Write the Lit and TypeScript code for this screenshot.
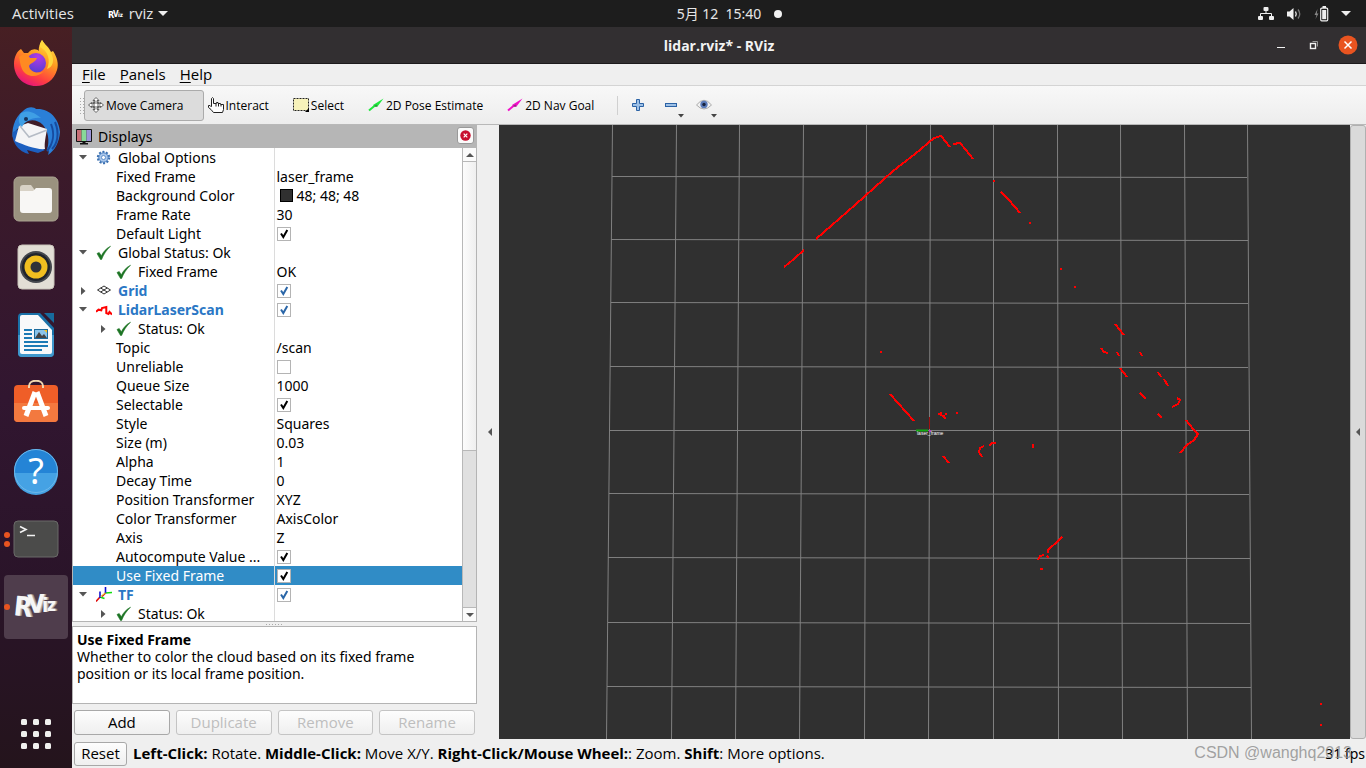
import { LitElement, html, svg, css, nothing } from "lit";
import { customElement, state } from "lit/decorators.js";
import { classMap } from "lit/directives/class-map.js";

type Kind = "gear" | "ok" | "grid" | "scan" | "tf";
interface Row {
  name: string;
  depth: number;
  icon?: Kind;
  arrow?: "open" | "closed";
  display?: boolean;
  value?: string;
  swatch?: boolean;
  check?: boolean;
}

const ROWS: Row[] = [
  { name: "Global Options", depth: 0, icon: "gear", arrow: "open" },
  { name: "Fixed Frame", depth: 1, value: "laser_frame" },
  { name: "Background Color", depth: 1, value: "48; 48; 48", swatch: true },
  { name: "Frame Rate", depth: 1, value: "30" },
  { name: "Default Light", depth: 1, check: true },
  { name: "Global Status: Ok", depth: 0, icon: "ok", arrow: "open" },
  { name: "Fixed Frame", depth: 1, icon: "ok", value: "OK" },
  { name: "Grid", depth: 0, icon: "grid", arrow: "closed", display: true, check: true },
  { name: "LidarLaserScan", depth: 0, icon: "scan", arrow: "open", display: true, check: true },
  { name: "Status: Ok", depth: 1, icon: "ok", arrow: "closed" },
  { name: "Topic", depth: 1, value: "/scan" },
  { name: "Unreliable", depth: 1, check: false },
  { name: "Queue Size", depth: 1, value: "1000" },
  { name: "Selectable", depth: 1, check: true },
  { name: "Style", depth: 1, value: "Squares" },
  { name: "Size (m)", depth: 1, value: "0.03" },
  { name: "Alpha", depth: 1, value: "1" },
  { name: "Decay Time", depth: 1, value: "0" },
  { name: "Position Transformer", depth: 1, value: "XYZ" },
  { name: "Color Transformer", depth: 1, value: "AxisColor" },
  { name: "Axis", depth: 1, value: "Z" },
  { name: "Autocompute Value ...", depth: 1, check: true },
  { name: "Use Fixed Frame", depth: 1, check: true },
  { name: "TF", depth: 0, icon: "tf", arrow: "open", display: true, check: true },
  { name: "Status: Ok", depth: 1, icon: "ok", arrow: "closed" },
];

const rowIcon = (kind: Kind) => {
  switch (kind) {
    case "gear":
      return html`<svg class="ico" viewBox="0 0 16 16" aria-hidden="true">
        <circle cx="7.5" cy="7.500" r="5.600" fill="none" stroke="#3a6fb0" stroke-width="2.200" stroke-dasharray="2 1.520" />
        <circle cx="7.500" cy="7.500" r="4.700" fill="#a9c6ea" stroke="#4a7fc0" />
        <circle cx="7.500" cy="7.500" r="2" fill="#fff" stroke="#4a7fc0" stroke-width=".8" />
      </svg>`;
    case "ok":
      return html`<svg class="ico" viewBox="0 0 16 16" aria-hidden="true">
        <path d="M1 8.500 3.200 7.500 5.300 10.800C7.500 6.500 10.200 3.500 14.500 1.200 10.500 5 7.800 9 5.600 14.500H4.500Z" fill="#1c7424" stroke="#1c7424" stroke-width=".6" />
      </svg>`;
    case "grid":
      return html`<svg class="ico" viewBox="0 0 16 16" aria-hidden="true" fill="none" stroke="#333" stroke-width="1">
        <path d="M8 3 14.500 7 8 11 1.500 7ZM4.700 5 11.200 9M11.200 5 4.700 9" />
      </svg>`;
    case "scan":
      return html`<svg class="ico" viewBox="0 0 16 16" aria-hidden="true" fill="none" stroke="#f00" stroke-width="2">
        <path d="M0 9.700 2.500 7.700 5.300 8.300 6 6 10.300 5V11L12.500 12 13.500 10 16 12.500" />
      </svg>`;
    case "tf":
      return html`<svg class="ico" viewBox="0 0 16 16" aria-hidden="true" fill="none" stroke-width="1.600">
        <path d="M4 10 0 14.500M9.500 6 6 9.500" stroke="#e01010" />
        <path d="M4 10 8.500 11.500M9.500 6 16 5.500" stroke="#10e010" />
        <path d="M4 11V4.500M9.500 6V0" stroke="#1010d0" />
        <path d="M4.500 9.500 9.500 6" stroke="#e0d020" stroke-width="1" />
      </svg>`;
  }
};

/* Runs of laser returns, in viewport pixels. */
const SCAN = [
  "784,267 794,259 804,250",
  "816,239 855,205 893,171 915,154 934,138 941,136 950,147",
  "953,144 960,143 966,150 973,159",
  "993,181 995,181", "1001,192 1009,200 1020,213", "1029,223 1031,223",
  "880,352 882,352", "890,394 914,421",
  "938,414 942,413", "940,415 944,416 945,419", "945,414 947,414", "956,413 958,413",
  "943,456 949,463", "996,443 992,443 989,446", "984,446 980,448 979,452 982,457",
  "1033,444 1033,448", "1060,269 1062,269", "1074,287 1076,287",
  "1115,324 1124,335", "1101,348 1104,352 1108,353", "1117,352 1119,356", "1140,352 1142,356",
  "1120,368 1127,377", "1158,372 1161,377", "1164,379 1168,386", "1140,393 1146,399",
  "1177,398 1180,400 1178,404 1172,407", "1158,414 1162,418",
  "1186,420 1193,429 1198,434 1194,440 1187,445 1180,453",
  "1062,537 1059,540 1048,550 1048,553", "1038,560 1040,556 1044,555", "1047,556 1049,558",
  "1040,569 1043,569", "1320,704 1322,704", "1320,725 1322,725",
];
const TOPS = [612, 676, 739, 803, 866, 930, 993, 1057, 1120, 1184, 1247];
const BOTTOMS = [606, 671, 735, 799, 864, 928, 993, 1058, 1122, 1187, 1251];
const LEVELS = [
  [612, 176, 1247, 177], [611, 239, 1248, 240], [611, 302, 1248, 303], [610, 366, 1248, 367],
  [609, 430, 1249, 430], [609, 493, 1249, 494], [608, 557, 1250, 558], [608, 622, 1250, 623], [607, 686, 1251, 687],
];

@customElement("app-root")
export class AppRoot extends LitElement {
  @state() private selected = 22;

  static styles = css`
    :host {
      display: grid;
      grid-template: 27px minmax(0, 1fr) / 72px minmax(0, 1fr);
      height: 100vh;
      overflow: hidden;
      font: 14px/19px "Noto Sans", "Noto Sans CJK SC", sans-serif;
      color: #000;
      background: #efefef;
    }
    * { box-sizing: border-box; }
    svg { display: block; flex: none; }
    button { font: inherit; color: inherit; border: 0; padding: 0; background: none; }

    .top {
      grid-column: 1 / -1;
      display: grid;
      grid-template-columns: 72px minmax(0, 1fr) auto minmax(0, 1fr);
      align-items: center;
      background: #1d1d1d;
      color: #e6e6e6;
    }
    .top-left { grid-column: 1 / 3; display: flex; align-items: center; padding-left: 12px; gap: 34px; font-family: "Open Sans", sans-serif; font-size: 15px; }
    .app { display: flex; align-items: center; gap: 5px; }
    .clock { display: flex; align-items: center; gap: 13px; }
    .clock::before, .dot { content: ""; width: 8px; height: 8px; border-radius: 50%; }
    .dot { background: #f2f2f2; }
    .clock button { white-space: pre; }
    .tray { display: flex; justify-content: flex-end; align-items: center; gap: 12px; padding-right: 15px; }

    .dock {
      display: flex;
      flex-direction: column;
      align-items: center;
      gap: 4px;
      padding: 4px 0 2px;
      background: linear-gradient(#471f23, #3b1a2a 20%, #311630 50%, #2a1429 75%, #24141c);
    }
    .dock button { position: relative; width: 64px; height: 64px; border-radius: 4px; display: grid; place-items: center; }
    .dock .active { background: #4f3d4c; }
    .dock .apps { margin-top: auto; }
    .pips { position: absolute; left: 0; top: 0; bottom: 0; display: flex; flex-direction: column; justify-content: center; gap: 3px; }
    .pips i { width: 6px; height: 6px; border-radius: 50%; background: #e95420; }

    .win { display: grid; grid-template-rows: 37px 22px 39px minmax(0, 1fr) 29px; min-width: 0; }
    .title { display: grid; grid-template-columns: 1fr auto 1fr; align-items: center; background: #322f31; color: #f2f2f2; border-bottom: 1px solid #1c1a1c; }
    .title h1 { grid-column: 2; margin: 0; font: 700 14px/19px "Open Sans", sans-serif; }
    .controls { display: flex; justify-content: flex-end; align-items: center; gap: 15px; padding-right: 8px; }
    .menu { display: flex; align-items: center; padding-left: 3px; border-bottom: 1px solid #d4d4d4; font-family: "Open Sans", sans-serif; font-size: 15px; }
    .menu button { padding: 0 7px; }
    .menu u { text-underline-offset: 2px; text-decoration-thickness: 1px; }

    .tools {
      display: flex;
      align-items: center;
      padding-left: 7px;
      font-family: "Open Sans", sans-serif;
      font-size: 12px;
      background: linear-gradient(#f8f8f8, #ededed);
      border-bottom: 1px solid #b8b8b8;
    }
    .grip { width: 5px; height: 17px; flex: none; background: radial-gradient(circle, #aaa 40%, transparent 45%) 0 0 / 3px 3px; }
    .tool { display: flex; align-items: center; gap: 2px; height: 31px; padding: 0 19px 0 3px; border: 1px solid transparent; border-radius: 3px; white-space: nowrap; }
    .tool.on { background: #dcdcdc; border-color: #ababab; }
    .small { position: relative; width: 33px; height: 31px; display: grid; place-items: center; }
    .small .more { position: absolute; right: 3px; bottom: 3px; }
    .sep { width: 1px; height: 19px; background: #d0d0d0; margin: 0 3px; }

    .main { display: grid; grid-template-columns: 405px 22px minmax(0, 1fr) 16px; min-height: 0; }
    .panel { display: grid; grid-template-rows: 23px minmax(0, 1fr) 4px 78px 35px; min-height: 0; }
    .head { display: flex; align-items: center; gap: 6px; background: #b6b6b6; padding: 0 3px 0 4px; }
    .head h2 { margin: 0; flex: 1; font: inherit; }
    .close { width: 17px; height: 17px; display: grid; place-items: center; background: #fafafa; border: 1px solid #999; border-radius: 3px; margin-bottom: 2px; }
    .tree { display: flex; overflow: hidden; background: #fff; border: solid #b4b4b4; border-width: 0 1px 1px; }
    .tree table { flex: 1; min-width: 0; border-collapse: collapse; table-layout: fixed; align-self: flex-start; }
    .c-name { width: 201px; }
    td, th { height: 19px; padding: 0; text-align: left; font-weight: 400; white-space: nowrap; overflow: hidden; }
    th { border-right: 1px solid #dcdcdc; }
    .cell { display: flex; align-items: center; height: 19px; }
    .d1 { padding-left: 20px; }
    .leaf { padding-left: 43px; }
    .exp { width: 20px; height: 19px; display: grid; place-items: center; margin-right: 3px; }
    .ico { width: 16px; height: 16px; margin-right: 6px; }
    .display { color: #2a77c5; font-weight: 700; }
    .val { padding-left: 2px; }
    .swatch { width: 13px; height: 13px; margin: 0 4px 0 3px; background: #303030; border: 1px solid #000; }
    .sel { background: #308cc6; }
    .sel th { color: #fff; }
    input {
      appearance: none;
      width: 14px;
      height: 14px;
      margin: 0;
      color: #000;
      background: #fff;
      border: 1px solid #b4b4b4;
      display: grid;
      place-items: center;
    }
    input:checked {
      background: #fff url("data:image/svg+xml,%3Csvg xmlns='http://www.w3.org/2000/svg' viewBox='0 0 12 12'%3E%3Cpath d='M3 5.500 5.300 9 9.300 2' fill='none' stroke='%23000' stroke-width='2'/%3E%3C/svg%3E");
    }
    .blue:checked {
      background-image: url("data:image/svg+xml,%3Csvg xmlns='http://www.w3.org/2000/svg' viewBox='0 0 12 12'%3E%3Cpath d='M3 5.500 5.300 9 9.300 2' fill='none' stroke='%232a66a8' stroke-width='2'/%3E%3C/svg%3E");
    }
    .scroll { width: 14px; display: flex; flex-direction: column; border-left: 1px solid #b8b8b8; background: #e0e0e0; }
    .scroll button { height: 14px; flex: none; display: grid; place-items: center; background: #fbfbfb; }
    .scroll .up { border-bottom: 1px solid #b8b8b8; }
    .scroll .down { border-top: 1px solid #b8b8b8; }
    .track { flex: 1; }
    .thumb { height: 65%; background: linear-gradient(90deg, #fcfcfc, #efefef); border-bottom: 1px solid #b8b8b8; }
    .split { display: grid; place-items: center; }
    .split i { width: 17px; height: 1px; background: repeating-linear-gradient(90deg, #aaa 0 1px, transparent 1px 3px); }
    .help { background: #fff; border: 1px solid #b4b4b4; padding: 4px 12px 4px 4px; }
    .help p, .help h3 { margin: 0; font: inherit; line-height: 17px; }
    .help h3 { font-weight: 700; }
    .actions { display: grid; grid-template-columns: repeat(4, 1fr); gap: 6px; padding: 6px 2px 4px; }
    .push { font-family: "Open Sans", sans-serif; font-size: 15px; border: 1px solid #a8a8a8; border-radius: 3px; background: linear-gradient(#fdfdfd, #efefef); }
    .push:disabled { color: #bebebe; border-color: #c4c4c4; }
    .gutter { display: grid; place-items: center; }
    .left { padding-left: 4px; }
    .right { background: #dadada; border: 1px solid #b0b0b0; border-radius: 3px; }
    .view { width: 100%; height: 100%; background: #303030; min-height: 0; }

    .status { display: flex; align-items: center; gap: 6px; padding-left: 2px; white-space: nowrap; font-family: "Open Sans", sans-serif; font-size: 15px; }
    .status .push { width: 53px; height: 24px; }
    .status p { margin: 0; flex: 1; font-size: 15px; }
    .fps { position: relative; padding-right: 1px; font: 14px/19px "Noto Sans", sans-serif; }
    .mark { position: absolute; right: 14px; top: -1px; font: 16px/19px "Liberation Sans", sans-serif; color: #8c8c8ccc; }
  `;

  private row(r: Row, i: number) {
    const on = i === this.selected;
    const id = "row-" + i;
    const leaf = !r.icon;
    return html`<tr class=${classMap({ sel: on })} @click=${() => (this.selected = i)}>
      <th scope="row">
        <div class=${classMap({ cell: true, leaf, d1: !leaf && r.depth === 1 })}>
          ${leaf
            ? nothing
            : html`<span class="exp">${r.arrow === "open"
                ? html`<svg width="8" height="5" aria-hidden="true"><path d="M0 0H8L4 4.500Z" fill="#555" /></svg>`
                : r.arrow === "closed"
                  ? html`<svg width="5" height="8" aria-hidden="true"><path d="M0 0V8L4.500 4Z" fill="#555" /></svg>`
                  : nothing}</span>${rowIcon(r.icon!)}`}
          <label class=${classMap({ display: !!r.display })} for=${id}>${r.name}</label>
        </div>
      </th>
      <td>
        <div class="cell val">
          ${r.check !== undefined
            ? html`<input id=${id} type="checkbox" class=${classMap({ blue: !!r.display })} .checked=${r.check} />`
            : html`${r.swatch ? html`<span class="swatch"></span>` : nothing}<output id=${id}>${r.value ?? ""}</output>`}
        </div>
      </td>
    </tr>`;
  }

  private dock() {
    return html`<nav class="dock" aria-label="Dock">
      <button aria-label="Firefox">
        <svg width="46" height="46" viewBox="0 0 46 46">
          <defs>
            <linearGradient id="ff" x1=".8" y1="0" x2=".3" y2="1"><stop offset="0" stop-color="#ffe94a" /><stop offset=".4" stop-color="#ff9a1f" /><stop offset=".75" stop-color="#ff4040" /><stop offset="1" stop-color="#e3127f" /></linearGradient>
            <radialGradient id="fp" cx=".6" cy=".2" r=".9"><stop offset="0" stop-color="#b33ae6" /><stop offset="1" stop-color="#4a3fd0" /></radialGradient>
          </defs>
          <path d="M8 9 11 13 15 13C19 8 24 9 26 11 25 7 28 3 29 0 32 5 36 7 38 12L40 11C44 17 46 24 44 30 41 40 33 46 23 46 10 46 1 36 1 24 1 17 4 11 8 9Z" fill="url(#ff)" />
          <circle cx="23" cy="23" r="10" fill="url(#fp)" />
          <path d="M6 17C10 13 15 14 17 18H24C23 22 17 23 16 26 17 33 27 34 31 31 25 38 13 38 9 29 7 25 7 20 6 17Z" fill="#ff8a22" />
          <path d="M27 7C35 11 38 20 34 29 40 27 42 20 38 13 36 8 32 6 29 0 27 3 26 5 27 7Z" fill="#ffd83d" />
        </svg>
      </button>
      <button aria-label="Thunderbird">
        <svg width="50" height="50" viewBox="0 0 50 50">
          <path d="M12 5C17 0 23 1 25 3 38 2 48 12 49 26 48 37 44 44 37 49 38 46 38 44 36 43 39 36 37 24 32 19 25 12 15 13 9 21 3 25 1 31 2 34 0 24 3 12 12 5Z" fill="#2a7fd8" />
          <path d="M2 26C0 36 8 46 18 48L16 44 27 47 34 44 10 22Z" fill="#1c5fc0" />
          <path d="M8 20 17 17 36 23C35 30 33 37 34 43 26 44 13 39 4 35Z" fill="#f4f4f6" />
          <path d="M9 20 18 31 36 24" fill="none" stroke="#b5bbc5" stroke-width="1.500" />
          <path d="M10 7C6 14 8 18 11 21 14 15 21 11 30 12 22 5 16 4 10 7Z" fill="#3f9fe5" />
          <circle cx="15" cy="13" r="2" fill="#17345c" />
          <path d="M40 18C44 28 42 38 36 45M44 16C49 28 46 38 41 43" fill="none" stroke="#174b9f" stroke-width="2" />
        </svg>
      </button>
      <button aria-label="Files">
        <svg width="46" height="46" viewBox="0 0 46 46">
          <rect x="1" y="1" width="44" height="44" rx="5" fill="#9a927f" stroke="#aaa391" />
          <path d="M7 12Q7 9 10 9H18L21 13H21V20H7Z" fill="#d8d2c6" />
          <path d="M7 15H20L23 12H36Q39 12 39 15V34Q39 37 36 37H10Q7 37 7 34Z" fill="#f8f7f5" />
        </svg>
      </button>
      <button aria-label="Rhythmbox">
        <svg width="46" height="46" viewBox="0 0 46 46">
          <rect x="5" y="1" width="36" height="44" rx="4" fill="#e2ded5" stroke="#c9c4ba" />
          <circle cx="23" cy="23" r="16" fill="#44474d" /><circle cx="23" cy="23" r="14" fill="#20242c" />
          <circle cx="23" cy="23" r="11.500" fill="#f0be20" /><circle cx="23" cy="23" r="5.500" fill="#303238" />
        </svg>
      </button>
      <button aria-label="LibreOffice Writer">
        <svg width="46" height="46" viewBox="0 0 46 46">
          <path d="M9 1H27L41 16V41Q41 45 37 45H9Q5 45 5 41V5Q5 1 9 1Z" fill="#1971a8" />
          <path d="M5 23H41V41Q41 45 37 45H9Q5 45 5 41Z" fill="#3f98cc" />
          <path d="M31 1H41V11Z" fill="#176b9d" />
          <path d="M9 3H25L39 18V40Q39 42 37 42H9Q7 42 7 40V5Q7 3 9 3Z" fill="#f8f9fa" />
          <path d="M11 18H19M11 22H19M11 26H19M11 30H35M11 34H35M11 38H29" stroke="#1b7ab5" stroke-width="2" />
          <rect x="21.500" y="17.500" width="13" height="9" fill="#8ac4ea" stroke="#1b6a9c" />
          <path d="M22 26 26 20 29 24 31 22 34 26Z" fill="#444" /><path d="M31 18H34V21Z" fill="#f5c020" />
        </svg>
      </button>
      <button aria-label="Ubuntu Software">
        <svg width="46" height="46" viewBox="0 0 46 46">
          <rect x="1" y="5" width="44" height="37" rx="4" fill="#ef5e28" /><path d="M1 23H45V38Q45 42 41 42H5Q1 42 1 38Z" fill="#f3793f" />
          <path d="M16 8V6C16-1 30-1 30 6V8" fill="none" stroke="#f2d8b0" stroke-width="2" />
          <path d="M22 12 13 36M24 12 33 36" stroke="#fff" stroke-width="5" /><rect x="9" y="26" width="28" height="4" rx="2" fill="#fff" />
        </svg>
      </button>
      <button aria-label="Help">
        <svg width="60" height="60" viewBox="-7 -7 60 60">
          <circle cx="23" cy="23" r="22" fill="#2484d6" /><path d="M1 25H45A22 22 0 0 1 1 25Z" fill="#45a2e4" />
          <circle cx="23" cy="23" r="21.500" fill="none" stroke="#6db8ea" />
          <text x="23" y="36" text-anchor="middle" font-family="Noto Sans, sans-serif" font-size="36" fill="#fff">?</text>
        </svg>
      </button>
      <button aria-label="Terminal">
        <span class="pips"><i></i><i></i></span>
        <svg width="46" height="38" viewBox="0 0 46 38">
          <rect x="1" y="1" width="44" height="36" rx="4" fill="#4b4b4a" stroke="#6a6a68" />
          <path d="M7 6.500 13 9.500 7 12.500M14 15.500H22" fill="none" stroke="#f2f2f2" stroke-width="1.600" />
        </svg>
      </button>
      <button class="active" aria-label="RViz">
        <span class="pips"><i></i></span>
        ${this.logo()}
      </button>
      <button class="apps" aria-label="Show Applications">
        <svg width="30" height="30" viewBox="0 0 30 30" fill="#f0f0ee">
          ${[0, 12, 24].map((y) => [0, 12, 24].map((x) => svg`<rect x=${x} y=${y} width="6" height="6" rx="1.500" />`))}
        </svg>
      </button>
    </nav>`;
  }

  private logo() {
    const letters = (dx: number, fill: string) => svg`<g transform=${`translate(${dx} 0)`} fill=${fill}>
      <text x="0" y="33" font-size="27" transform="rotate(6 0 33)">R</text>
      <text x="15" y="31" font-size="25" transform="rotate(-3 15 31)">V</text>
      <text x="29" y="30" font-size="20">i</text>
      <text x="34" y="29" font-size="17">z</text>
    </g>`;
    return html`<svg width="60" height="50" viewBox="-7 0 60 50" font-family="Liberation Sans Narrow, DejaVu Sans Condensed, sans-serif" font-weight="700" aria-hidden="true">
      ${letters(2, "#8b8585")}${letters(1, "#b8b4b4")}${letters(0, "#f6f6f6")}
    </svg>`;
  }

  render() {
    const left = html`<svg width="4" height="8" aria-hidden="true"><path d="M4 0V8L0 4Z" fill="#555" /></svg>`;
    const more = html`<svg class="more" width="6" height="4" aria-hidden="true"><path d="M0 0H6L3 3.500Z" fill="#444" /></svg>`;
    const pose = (c: string) => html`<svg width="16" height="16" viewBox="0 0 16 16" aria-hidden="true">
      <path d="M1 13.500 7 8.500" stroke=${c} stroke-width="2" /><path d="M5 8 15.500 1.500 9.500 9.500 7 10Z" fill=${c} /><path d="M6 9 9.500 10 8.500 7.500Z" fill="#444" opacity=".6" />
    </svg>`;
    return html`
      <header class="top">
        <div class="top-left">
          <button>Activities</button>
          <button class="app">
            <svg width="16" height="16" viewBox="0 0 16 16" font-family="DejaVu Sans Condensed, sans-serif" font-weight="700" fill="#fff" aria-hidden="true">
              <text x="0" y="12" font-size="9">R</text><text x="5" y="11" font-size="8">V</text><text x="10" y="11" font-size="6">iz</text>
            </svg>
            <span>rviz</span>
            <svg width="10" height="5" aria-hidden="true"><path d="M0 0H10L5 5Z" fill="#eee" /></svg>
          </button>
        </div>
        <div class="clock"><button>5月 12  15:40</button><span class="dot"></span></div>
        <div class="tray">
          <svg width="16" height="14" viewBox="0 0 16 14" fill="#f0f0f0" aria-label="Network"><rect x="5.500" y="0" width="5" height="4" rx="1" /><rect x="0" y="9" width="5" height="4" rx="1" /><rect x="11" y="9" width="5" height="4" rx="1" /><path d="M8 3V6.500M2.500 10V6.500H13.500V10" fill="none" stroke="#f0f0f0" /></svg>
          <svg width="16" height="14" viewBox="0 0 16 14" aria-label="Volume"><path d="M1 4.500H3.500L7.500 1V13L3.500 9.500H1Z" fill="#f0f0f0" /><path d="M9.500 4.500Q11 7 9.500 9.500" fill="none" stroke="#f0f0f0" stroke-width="1.300" /><path d="M12 2.500Q15.500 7 12 11.500" fill="none" stroke="#777" stroke-width="1.300" /></svg>
          <svg width="15" height="16" viewBox="0 0 15 16" aria-label="Battery"><path d="M3.500 3 .5 9H2.500L1.500 13 4.500 7.500H2.800Z" fill="#888" /><rect x="6.700" y="2.200" width="7" height="12.600" rx="1" fill="none" stroke="#f0f0f0" stroke-width="1.200" /><rect x="8.500" y="0" width="3.500" height="2" fill="#f0f0f0" /><rect x="8.200" y="4" width="4" height="9.200" fill="#f0f0f0" /></svg>
          <svg width="10" height="5" aria-hidden="true"><path d="M0 0H10L5 5Z" fill="#eee" /></svg>
        </div>
      </header>
      ${this.dock()}
      <main class="win">
        <div class="title">
          <h1>lidar.rviz* - RViz</h1>
          <div class="controls">
            <button aria-label="Minimize"><svg width="18" height="18"><path d="M5 11.500H13" stroke="#f2f2f2" /></svg></button>
            <button aria-label="Restore"><svg width="18" height="18" fill="none"><path d="M7.500 5.500H12.500V10.500" stroke="#999" /><rect x="5.500" y="7.500" width="5" height="5" stroke="#f2f2f2" stroke-width="1.400" /></svg></button>
            <button aria-label="Close"><svg width="20" height="20"><circle cx="10" cy="10" r="9.500" fill="#e95420" /><path d="M6.500 6.500 13.500 13.500M13.500 6.500 6.500 13.500" stroke="#fff" stroke-width="1.500" /></svg></button>
          </div>
        </div>
        <nav class="menu">
          <button><u>F</u>ile</button><button><u>P</u>anels</button><button><u>H</u>elp</button>
        </nav>
        <div class="tools" role="toolbar">
          <span class="grip"></span>
          <button class="tool on">
            <svg width="16" height="16" viewBox="0 0 16 16" aria-hidden="true" fill="#fff" stroke="#555" stroke-width=".9"><ellipse cx="8" cy="8" rx="6" ry="2.500" fill="none" /><ellipse cx="8" cy="8" rx="2.500" ry="5" fill="none" /><path d="M8 .5 11 3.500H9V7H12.500V5.500L15.500 8 12.500 10.500V9H9V12.500H11L8 15.500 5 12.500H7V9H3.500V10.500L.5 8 3.500 5.500V7H7V3.500H5Z" /></svg>
            Move Camera
          </button>
          <button class="tool">
            <svg width="16" height="16" viewBox="0 0 16 16" aria-hidden="true"><path d="M3.500 9.500V1.500Q4.500-.3 5.500 1.500V6.500H8.500V5.500H10V6.500H12.500V7.500H15.500V12.500L14.500 15.500H5.500L3 12.500.5 10.500V8.500H2L3.500 10" fill="#fff" stroke="#222" /><path d="M8 7V9.500M10.500 7V9.500M13 8V9.500" stroke="#222" /></svg>
            Interact
          </button>
          <button class="tool">
            <svg width="16" height="14" viewBox="0 0 16 14" aria-hidden="true"><rect x=".5" y=".5" width="15" height="12" fill="#f7f2ba" stroke="#222" stroke-dasharray="2 1" /><path d="M16 10V14H12Z" /></svg>
            Select
          </button>
          <button class="tool">${pose("#1ee83c")}2D Pose Estimate</button>
          <button class="tool">${pose("#f010c8")}2D Nav Goal</button>
          <span class="sep"></span>
          <button class="small" aria-label="Add tool"><svg width="12" height="12" viewBox="0 0 12 12"><path d="M4.500.5H7.500V4.500H11.500V7.500H7.500V11.500H4.500V7.500H.5V4.500H4.500Z" fill="#9dc0e6" stroke="#2b62a5" /></svg></button>
          <button class="small" aria-label="Remove tool"><svg width="12" height="4" viewBox="0 0 12 4"><rect x=".5" y=".5" width="11" height="3" fill="#9dc0e6" stroke="#2b62a5" /></svg>${more}</button>
          <button class="small" aria-label="Visibility"><svg width="16" height="12" viewBox="0 0 16 12"><path d="M.5 6Q8-3.500 15.500 6 8 14 .5 6Z" fill="#f2f2f2" stroke="#aaa" /><circle cx="8" cy="5.500" r="3.700" fill="#5c7cba" /><circle cx="8" cy="5.500" r="1.700" fill="#18223c" /></svg>${more}</button>
        </div>
        <div class="main">
          <section class="panel">
            <div class="head">
              <svg width="16" height="17" viewBox="0 0 16 17" aria-hidden="true"><rect width="16" height="13" y="1" rx="1" fill="#111" /><path d="M1 2H5.500V13H1Z" fill="#c87078" /><path d="M5.500 2H10.500V13H5.500Z" fill="#88d898" /><path d="M10.500 2H15V13H10.500Z" fill="#9c94d8" /><path d="M6.500 14H9.500V15H12V16.500H4V15H6.500Z" fill="#111" /></svg>
              <h2>Displays</h2>
              <button class="close" aria-label="Close panel"><svg width="11" height="11" viewBox="0 0 11 11"><circle cx="5.500" cy="5.500" r="5.200" fill="#c8102e" /><path d="M3.700 3.700 7.300 7.300M7.300 3.700 3.700 7.300" stroke="#fff" stroke-width="1.200" /></svg></button>
            </div>
            <div class="tree">
              <table>
                <colgroup><col class="c-name" /><col /></colgroup>
                <tbody>${ROWS.map((r, i) => this.row(r, i))}</tbody>
              </table>
              <div class="scroll">
                <button class="up" aria-label="Scroll up"><svg width="8" height="4"><path d="M0 4H8L4 0Z" fill="#555" /></svg></button>
                <div class="track"><div class="thumb"></div></div>
                <button class="down" aria-label="Scroll down"><svg width="8" height="4"><path d="M0 0H8L4 4Z" fill="#555" /></svg></button>
              </div>
            </div>
            <div class="split"><i></i></div>
            <div class="help">
              <h3>Use Fixed Frame</h3>
              <p>Whether to color the cloud based on its fixed frame position or its local frame position.</p>
            </div>
            <div class="actions">
              <button class="push">Add</button>
              <button class="push" disabled>Duplicate</button>
              <button class="push" disabled>Remove</button>
              <button class="push" disabled>Rename</button>
            </div>
          </section>
          <button class="gutter left" aria-label="Collapse left panel">${left}</button>
          <svg class="view" viewBox="499 125 851 614" preserveAspectRatio="xMidYMid slice" role="img" aria-label="Laser scan view">
            <g stroke="#808080" stroke-width="1">
              ${TOPS.map((x, i) => svg`<line x1=${x + 0.5} y1="125" x2=${BOTTOMS[i] + 0.5} y2="739" />`)}
              ${LEVELS.map(([a, b, c, d]) => svg`<line x1=${a} y1=${b + 0.5} x2=${c} y2=${d + 0.5} />`)}
            </g>
            <g stroke="#f00" stroke-width="2" fill="none" shape-rendering="crispEdges">
              ${SCAN.map((p) => svg`<polyline points=${p} />`)}
            </g>
            <path d="M929.500 417V429" stroke="#a01010" />
            <path d="M916 430.500H928" stroke="#12a812" stroke-width="2" />
            <rect x="929" y="430" width="2" height="2" fill="#b040c0" />
            <text x="917" y="435" font-family="Liberation Sans, sans-serif" font-size="5" fill="#fff">laser_frame</text>
          </svg>
          <button class="gutter right" aria-label="Collapse right panel">${left}</button>
        </div>
        <footer class="status">
          <button class="push">Reset</button>
          <p><b>Left-Click:</b> Rotate. <b>Middle-Click:</b> Move X/Y. <b>Right-Click/Mouse Wheel:</b>: Zoom. <b>Shift</b>: More options.</p>
          <span class="fps">31 fps<span class="mark">CSDN @wanghq2013</span></span>
        </footer>
      </main>
    `;
  }
}
